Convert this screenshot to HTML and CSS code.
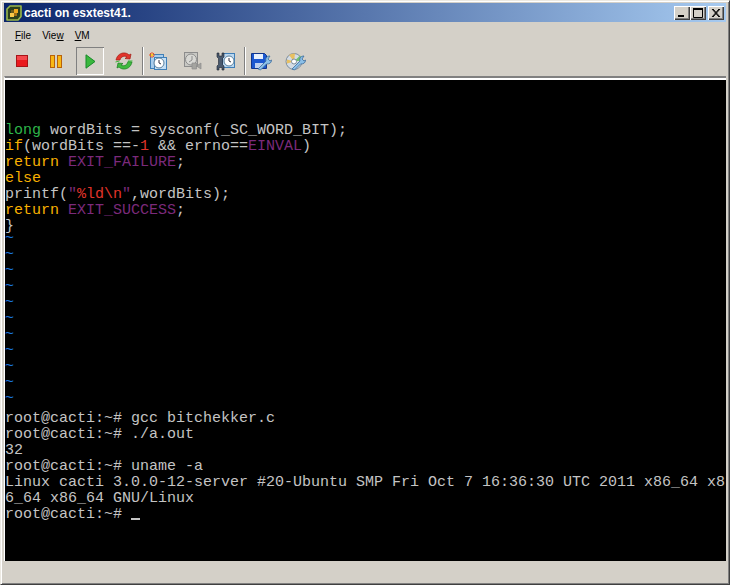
FILE: index.html
```html
<!DOCTYPE html>
<html lang="en">
<head>
<meta charset="utf-8">
<title>cacti on esxtest41.</title>
<link rel="stylesheet" href="styles.css">
</head>
<body>
<div class="window">
  <header class="titlebar">
    <svg class="appicon" width="16" height="16" viewBox="0 0 16 16">
      <path d="M4 1h11v10.500L12 15H1V4z" fill="#2c3f1c" stroke="#9ab84a" stroke-width="1.600" stroke-linejoin="round"/>
      <rect x="8" y="4" width="4" height="4" fill="#f0a81e"/>
      <rect x="4" y="8" width="4" height="4" fill="#f8c84a"/>
      <rect x="8" y="8" width="3" height="3" fill="#a06c14"/>
      <rect x="5" y="5" width="3" height="3" fill="#6a5a1c"/>
    </svg>
    <span class="title">cacti on esxtest41.</span>
    <div class="winbtns">
      <span class="winbtn"><svg width="16" height="14" viewBox="0 0 16 14"><rect x="4" y="9" width="6" height="2" fill="#000"/></svg></span>
      <span class="winbtn"><svg width="16" height="14" viewBox="0 0 16 14"><path d="M3.500 2.500h9v9h-9z" fill="none" stroke="#000"/><rect x="3" y="2" width="10" height="2" fill="#000"/></svg></span>
      <span class="winbtn winbtn-close"><svg width="16" height="14" viewBox="0 0 16 14"><path d="M4 3l7 8M5 3l7 8M11 3l-7 8M12 3l-7 8" stroke="#000" fill="none"/></svg></span>
    </div>
  </header>
  <nav class="menubar">
    <span class="menu"><u>F</u>ile</span>
    <span class="menu">Vie<u>w</u></span>
    <span class="menu"><u>V</u>M</span>
  </nav>
  <div class="toolbar">
    <span class="tool"><svg width="12" height="12" viewBox="0 0 12 12"><rect x=".5" y=".5" width="11" height="11" fill="#ea1a1e" stroke="#a81418"/><rect x="1" y="1" width="10" height="4" fill="#f4484c"/></svg></span>
    <span class="tool"><svg width="13" height="13" viewBox="0 0 13 13"><rect x=".5" y=".5" width="4" height="12" fill="#f9b814" stroke="#b8620a"/><rect x="7.500" y=".5" width="4" height="12" fill="#f9b814" stroke="#b8620a"/></svg></span>
    <span class="tool tool-on"><svg width="11" height="15" viewBox="0 0 11 15"><path d="M1 .8l9 6.700-9 6.700z" fill="#3ab83e" stroke="#178a28"/></svg></span>
    <span class="tool"><svg width="18" height="18" viewBox="0 0 18 18"><path d="M1 8C2 3 6 .5 10 1c2 .3 3 1 4 2l2-1-1 5-5-.5 2-1.500C10 3.500 6 4 5 8z" fill="#e2342c" stroke="#a01c14" stroke-width=".7"/><path d="M17 10c-1 5-5 7.500-9 7-2-.3-3-1-4-2l-2 1 1-5 5 .5-2 1.500c2 1.500 6 1 7-3.500z" fill="#3eba3e" stroke="#1a7a20" stroke-width=".7"/><path d="M.5 10l4-1M13 9h4.500" stroke="#3eba3e"/></svg></span>
    <span class="sep"></span>
    <span class="tool"><svg width="20" height="20" viewBox="0 0 20 20"><rect x="2.500" y="3.500" width="13" height="14" fill="#a9cdec" stroke="#3f7fb8"/><rect x="6.500" y="6.500" width="12" height="12" fill="#c4def4" stroke="#3f7fb8"/><circle cx="11" cy="12" r="5" fill="#fff" stroke="#5a7f9c"/><path d="M11 9v3l2 1" stroke="#334" fill="none"/><path d="M4 1v6M1 4h6M2 2l4 4M6 2l-4 4" stroke="#ee5522"/><circle cx="4" cy="4" r="1.200" fill="#ffcc22"/></svg></span>
    <span class="tool"><svg width="20" height="20" viewBox="0 0 20 20"><rect x="2.500" y="1.500" width="13" height="14" fill="#c8c8c4" stroke="#8c8c8c"/><circle cx="9" cy="8.500" r="5.500" fill="#d8d8d4" stroke="#8c8c8c"/><path d="M10 5v4l-3 2" stroke="#8c8c8c" fill="none"/><path d="M10 12h4.500v6H10zM14.500 15l4.500-3v6z" fill="#a4a4a0" stroke="#8c8c8c" stroke-width=".7"/></svg></span>
    <span class="tool"><svg width="20" height="20" viewBox="0 0 20 20"><rect x="6.500" y="2.500" width="12" height="14" fill="#b9d6ef" stroke="#3f7fb8"/><circle cx="13" cy="10" r="5" fill="#fff" stroke="#5a7f9c"/><path d="M13 7v3l2 1" stroke="#334" fill="none"/><path d="M1 2h2v3h3V2h2v4L6.500 7.500v6L8 15v4H6v-2.500H3V19H1v-4l1.500-1.500v-6L1 6z" fill="#4a5a6e" stroke="#1c2430" stroke-width=".6"/></svg></span>
    <span class="sep"></span>
    <span class="tool tool-save"><svg width="21" height="19" viewBox="0 0 21 19"><path d="M.5 1.500h13l2 2v13H.5z" fill="#1c58d0" stroke="#12368c"/><rect x="3" y="2" width="9" height="5" fill="#e8f0fc"/><rect x="4" y="11" width="8" height="5" fill="#bcd0f0"/><path d="M7 17l8-8c-1-3 1-5 4-5l-2 3 2 2 1.500-1c0 3-2 4-5 4l-6 6z" fill="#8cc0e8" stroke="#3c6c9c" stroke-width=".8"/></svg></span>
    <span class="tool"><svg width="21" height="19" viewBox="0 0 21 19"><circle cx="9" cy="9.500" r="8" fill="#d4dce4" stroke="#7c8c9c"/><path d="M9 9.500L4 3a8 8 0 0 1 6-1.500zM9 9.500l-7 2a8 8 0 0 1 0-4z" fill="#e8c060"/><path d="M9 9.500l6-6a8 8 0 0 1 2 5z" fill="#70c070"/><circle cx="9" cy="9.500" r="2.500" fill="#fff" stroke="#7c8c9c"/><path d="M7 17l8-8c-1-3 1-5 4-5l-2 3 2 2 1.500-1c0 3-2 4-5 4l-6 6z" fill="#8cc0e8" stroke="#3c6c9c" stroke-width=".8"/></svg></span>
  </div>
  <main class="console">
<pre class="term">


<span class="type">long</span> wordBits = sysconf(_SC_WORD_BIT);
<span class="stmt">if</span>(wordBits ==-<span class="str">1</span> &amp;&amp; errno==<span class="const">EINVAL</span>)
<span class="stmt">return</span> <span class="const">EXIT_FAILURE</span>;
<span class="stmt">else</span>
printf(<span class="const">"</span><span class="str">%ld\n</span><span class="const">"</span>,wordBits);
<span class="stmt">return</span> <span class="const">EXIT_SUCCESS</span>;
}
<span class="tilde">~</span>
<span class="tilde">~</span>
<span class="tilde">~</span>
<span class="tilde">~</span>
<span class="tilde">~</span>
<span class="tilde">~</span>
<span class="tilde">~</span>
<span class="tilde">~</span>
<span class="tilde">~</span>
<span class="tilde">~</span>
<span class="tilde">~</span>
root@cacti:~# gcc bitchekker.c
root@cacti:~# ./a.out
32
root@cacti:~# uname -a
Linux cacti 3.0.0-12-server #20-Ubuntu SMP Fri Oct 7 16:36:30 UTC 2011 x86_64 x8
6_64 x86_64 GNU/Linux
root@cacti:~# <span class="cursor"></span></pre>
  </main>
  <footer class="statusbar"></footer>
</div>
</body>
</html>
```
FILE: styles.css
```css
* { box-sizing: border-box; }
html, body { margin: 0; padding: 0; }
body { width: 730px; height: 585px; overflow: hidden; background: #d4d0c8; }
.window {
  width: 730px;
  height: 585px;
  display: flex;
  flex-direction: column;
  background: #d4d0c8;
  border-style: solid;
  border-width: 1px;
  border-color: #ece9e2 #404040 #404040 #ece9e2;
  box-shadow: inset 1px 1px 0 #fff, inset -1px -1px 0 #808080;
  padding: 2px 3px 2px 3px;
}
.titlebar {
  height: 19px;
  flex: none;
  display: flex;
  align-items: center;
  padding: 1px 2px 0 2px;
  background: linear-gradient(to right, #0a246a, #a6caf0);
}
.appicon { flex: none; margin-right: 2px; margin-top: -1px; }
.title {
  flex: 1;
  font: bold 12px/16px "Liberation Sans", sans-serif;
  color: #fff;
}
.winbtns { display: flex; }
.winbtn {
  width: 16px;
  height: 14px;
  background: #d4d0c8;
  box-shadow: inset 1px 1px 0 #fff, inset -1px -1px 0 #404040, inset -2px -2px 0 #808080;
  display: flex;
}
.winbtn-close { margin-left: 2px; }
.menubar {
  height: 25px;
  flex: none;
  display: flex;
  align-items: center;
  padding: 3px 0 0 11px;
  gap: 11px;
  font: 10px/14px "Liberation Sans", sans-serif;
  color: #000;
}
.toolbar {
  height: 29px;
  flex: none;
  display: flex;
  align-items: flex-start;
  padding-left: 4px;
}
.tool {
  width: 28px;
  height: 28px;
  margin-right: 6px;
  display: flex;
  align-items: center;
  justify-content: center;
  flex: none;
}
.tool-on {
  box-shadow: inset 1px 1px 0 #808080, inset -1px -1px 0 #fff;
}
.sep {
  width: 2px;
  height: 28px;
  margin-left: -2px;
  background: #808080;
  border-right: 1px solid #fff;
  flex: none;
}
.sep + .tool-save { margin-left: 1px; }
.console {
  flex: none;
  height: 485px;
  border-top: 2px solid #808080;
  border-left: 1px solid #fff;
  background: #000;
  box-shadow: inset 0 2px 0 #fff;
  overflow: hidden;
}
.term {
  margin: 0;
  padding-top: 13px;
  font: 15px/16px "Liberation Mono", monospace;
  color: #c4c4c4;
  white-space: pre;
}
.type { color: #2eb54a; }
.stmt { color: #f8b000; }
.const { color: #7b2a7b; }
.str { color: #e0342a; }
.tilde { display: inline-block; transform: translateY(-4px); color: #1a78e0; }
.cursor { display: inline-block; width: 9px; height: 2px; background: #c4c4c4; vertical-align: -2px; }
.statusbar { flex: 1; background: #d4d0c8; }
```
